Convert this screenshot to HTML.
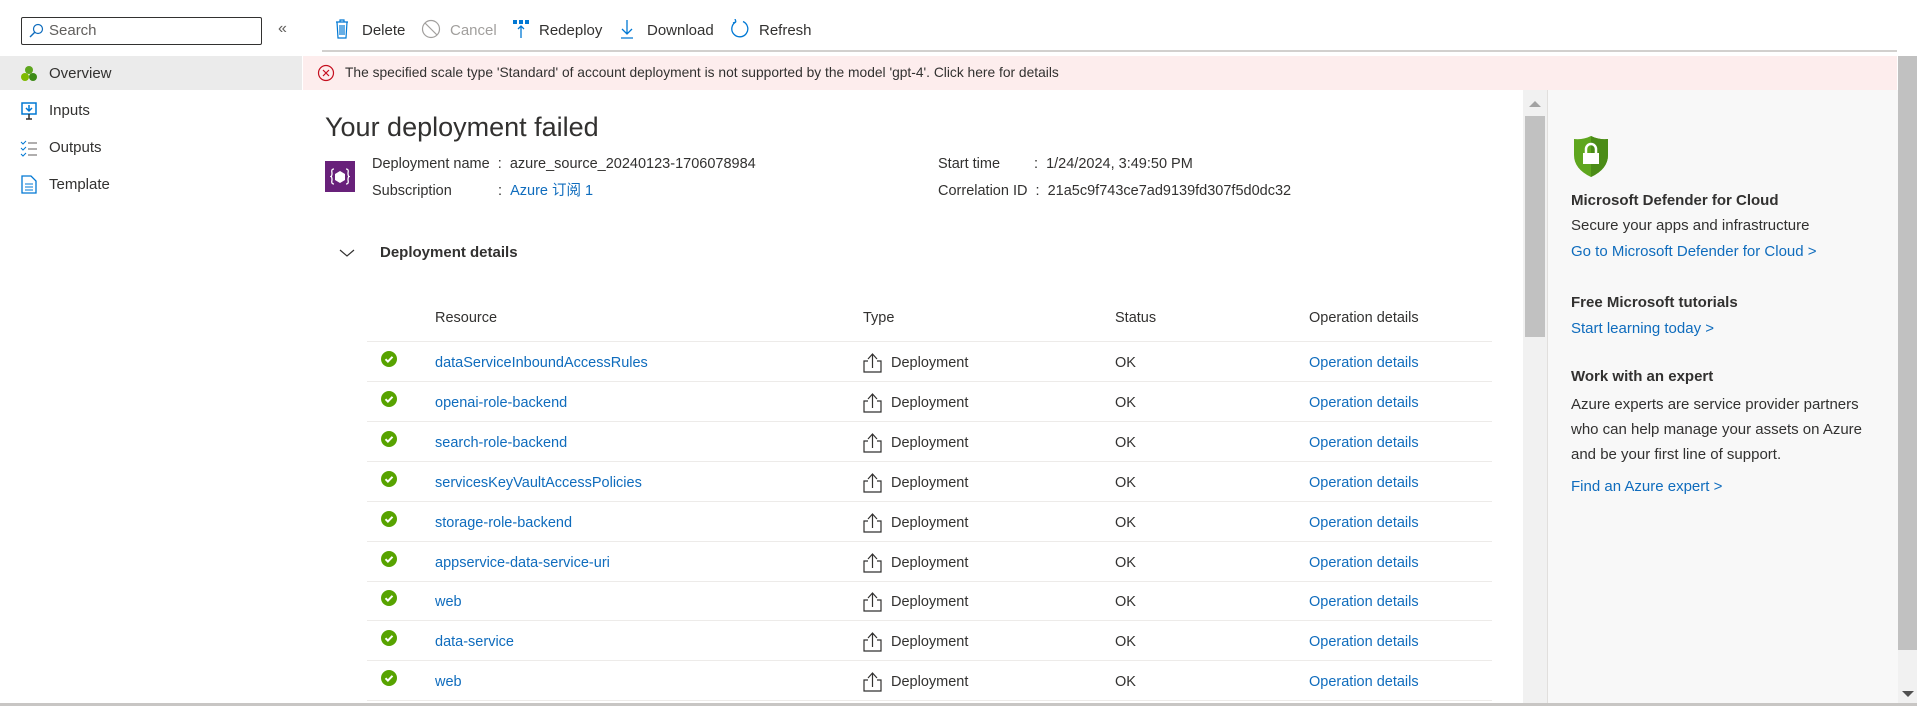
<!DOCTYPE html>
<html><head><meta charset="utf-8"><style>
*{box-sizing:border-box;margin:0;padding:0}
body{width:1917px;height:706px;overflow:hidden;background:#fff;font-family:"Liberation Sans","Noto Sans CJK SC",sans-serif;color:#323130;position:relative;font-size:15px}
.a{position:absolute;white-space:nowrap}
.link{color:#0f6cbd}
.row{position:absolute;left:367px;width:1125px;height:40px;border-bottom:1px solid #edebe9;font-size:14.5px}
.row span{position:absolute;top:13px;line-height:17px}
.ck{position:absolute;left:14px;top:12px;width:16px;height:16px;border-radius:50%;background:#57a300}
</style></head><body>
<!-- sidebar -->
<div class="a" style="left:21px;top:17px;width:241px;height:28px;border:1px solid #323130;border-radius:2px"></div>
<svg class="a" style="left:28px;top:23px" width="16" height="16" viewBox="0 0 16 16"><circle cx="10" cy="6" r="4.5" fill="none" stroke="#0f6cbd" stroke-width="1.2"/><path d="M7 9 L2 14" stroke="#0f6cbd" stroke-width="1.4"/></svg>
<div class="a" style="left:49px;top:22px;color:#605e5c;font-size:15px">Search</div>
<div class="a" style="left:278px;top:20px;color:#605e5c;font-size:16px">«</div>
<div class="a" style="left:0;top:56px;width:302px;height:34px;background:#ebebeb"></div>
<svg class="a" style="left:20px;top:65px" width="18" height="18" viewBox="0 0 18 18"><circle cx="9" cy="5" r="4" fill="#5ea61e"/><circle cx="5" cy="12" r="4" fill="#7fba00"/><circle cx="13" cy="12" r="4" fill="#3d8b17"/></svg>
<div class="a" style="left:49px;top:65px">Overview</div>
<svg class="a" style="left:20px;top:102px" width="18" height="18" viewBox="0 0 18 18"><rect x="2" y="1" width="14" height="11" fill="#fff" stroke="#0078d4" stroke-width="1.5"/><path d="M9 3v6M6 6l3 3 3-3" stroke="#0078d4" fill="none" stroke-width="1.5"/><path d="M6 17h6M9 12v5" stroke="#323130" stroke-width="1.5"/></svg>
<div class="a" style="left:49px;top:102px">Inputs</div>
<svg class="a" style="left:20px;top:139px" width="18" height="18" viewBox="0 0 18 18"><path d="M1 3l2 2 3-3M1 9l2 2 3-3M1 15l2 2 3-3" stroke="#0078d4" fill="none"/><path d="M8 4h9M8 10h9M8 16h9" stroke="#605e5c"/></svg>
<div class="a" style="left:49px;top:139px">Outputs</div>
<svg class="a" style="left:21px;top:175px" width="16" height="19" viewBox="0 0 16 19"><path d="M1 1h9l5 5v12H1z" fill="#fff" stroke="#0078d4" stroke-width="1.3"/><path d="M4 9h8M4 12h8M4 15h8" stroke="#0078d4"/></svg>
<div class="a" style="left:49px;top:176px">Template</div>
<!-- toolbar -->
<svg class="a" style="left:335px;top:19px" width="14" height="20" viewBox="0 0 14 20"><path d="M1 3h12M5 3V1h4v2M2 3l1 16h8l1-16M5 6v10M7 6v10M9 6v10" stroke="#0078d4" fill="none" stroke-width="1.2"/></svg>
<div class="a" style="left:362px;top:22px">Delete</div>
<svg class="a" style="left:421px;top:19px" width="20" height="20" viewBox="0 0 20 20"><circle cx="10" cy="10" r="8.5" fill="none" stroke="#a19f9d" stroke-width="1.2"/><path d="M4 4l12 12" stroke="#a19f9d" stroke-width="1.2"/></svg>
<div class="a" style="left:450px;top:22px;color:#a19f9d">Cancel</div>
<svg class="a" style="left:513px;top:20px" width="16" height="18" viewBox="0 0 16 18"><rect x="0" y="0" width="4" height="4" fill="#0078d4"/><rect x="6" y="0" width="4" height="4" fill="#0078d4"/><rect x="12" y="0" width="4" height="4" fill="#0078d4"/><path d="M8 6v12M5 9l3-3 3 3" stroke="#0078d4" fill="none" stroke-width="1.3"/></svg>
<div class="a" style="left:539px;top:22px">Redeploy</div>
<svg class="a" style="left:620px;top:19px" width="14" height="20" viewBox="0 0 14 20"><path d="M7 1v14M2 10l5 5 5-5M1 19h12" stroke="#0078d4" fill="none" stroke-width="1.3"/></svg>
<div class="a" style="left:647px;top:22px">Download</div>
<svg class="a" style="left:730px;top:19px" width="20" height="20" viewBox="0 0 20 20"><path d="M13 2.5A8 8 0 1 1 6 2.8M6 2.8 L5 0M6 2.8L3 4" stroke="#0078d4" fill="none" stroke-width="1.3"/></svg>
<div class="a" style="left:759px;top:22px">Refresh</div>
<div class="a" style="left:322px;top:50px;width:1575px;height:2px;background:#d2d0ce"></div>
<!-- banner -->
<div class="a" style="left:303px;top:56px;width:1594px;height:34px;background:#fdeded"></div>
<svg class="a" style="left:317px;top:64px" width="18" height="18" viewBox="0 0 18 18"><circle cx="9" cy="9" r="7.5" fill="none" stroke="#c50f1f" stroke-width="1.2"/><path d="M6 6l6 6M12 6l-6 6" stroke="#c50f1f" stroke-width="1.2"/></svg>
<div class="a" style="left:345px;top:65px;font-size:13.8px">The specified scale type 'Standard' of account deployment is not supported by the model 'gpt-4'. Click here for details</div>
<!-- main -->
<div class="a" style="left:325px;top:112px;font-size:27px;color:#323130">Your deployment failed</div>
<div class="a" style="left:325px;top:161px;width:30px;height:31px;background:#68217a"></div>
<svg class="a" style="left:330px;top:167px" width="20" height="19" viewBox="0 0 20 19"><path d="M4 2Q1 2 2 6Q2 9 1 9.5Q2 10 2 13Q1 17 4 17M16 2Q19 2 18 6Q18 9 19 9.5Q18 10 18 13Q19 17 16 17" stroke="#fff" fill="none" stroke-width="1.3"/><path d="M10 4l5 3v6l-5 3-5-3V7z" fill="#fff"/></svg>
<div class="a" style="left:372px;top:156px;font-size:14.5px;line-height:17px">Deployment name&nbsp;&nbsp;:&nbsp;&nbsp;azure_source_20240123-1706078984</div>
<div class="a" style="left:372px;top:183px;font-size:14.5px;line-height:17px">Subscription</div>
<div class="a" style="left:498px;top:183px;font-size:14.5px;line-height:17px;height:17px">:&nbsp;&nbsp;<span class="link">Azure 订阅 1</span></div>
<div class="a" style="left:938px;top:156px;font-size:14.5px;line-height:17px">Start time</div>
<div class="a" style="left:1034px;top:156px;font-size:14.5px;line-height:17px">:&nbsp;&nbsp;1/24/2024, 3:49:50 PM</div>
<div class="a" style="left:938px;top:183px;font-size:14.5px;line-height:17px">Correlation ID&nbsp;&nbsp;:&nbsp;&nbsp;21a5c9f743ce7ad9139fd307f5d0dc32</div>
<svg class="a" style="left:339px;top:248px" width="16" height="10" viewBox="0 0 16 10"><path d="M1 2l7 6 7-6" stroke="#323130" fill="none" stroke-width="1.2"/></svg>
<div class="a" style="left:380px;top:244px;font-weight:bold;font-size:15px">Deployment details</div>
<!-- table -->
<div class="row" style="top:302px"><span style="left:68px;top:8px">Resource</span><span style="left:496px;top:8px">Type</span><span style="left:748px;top:8px">Status</span><span style="left:942px;top:8px">Operation details</span></div>
<div id="rows"></div>
<!-- scrollbar -->
<div class="a" style="left:1523px;top:90px;width:24px;height:616px;background:#f1f1f1"></div>
<svg class="a" style="left:1528px;top:100px" width="14" height="8"><path d="M1 7L7 1 13 7z" fill="#a3a3a3"/></svg>
<div class="a" style="left:1525px;top:116px;width:20px;height:221px;background:#c1c1c1"></div>
<!-- right panel -->
<div class="a" style="left:1547px;top:90px;width:351px;height:616px;background:#f8f8f8;border-left:1px solid #e1dfdd"></div>
<svg class="a" style="left:1573px;top:135px" width="36" height="43" viewBox="0 0 36 43"><path d="M18 1Q26 5 35 4V20Q35 34 18 42Q1 34 1 20V4Q10 5 18 1z" fill="#5ea61e"/><path d="M18 1Q26 5 35 4V20Q35 34 18 42z" fill="#4b8c17"/><rect x="10" y="18" width="16" height="11" fill="#fff"/><path d="M13 18v-4a5 5 0 0 1 10 0v4" stroke="#fff" stroke-width="2.5" fill="none"/></svg>
<div class="a" style="left:1571px;top:192px;font-size:15px;font-weight:bold;color:#323130">Microsoft Defender for Cloud</div>
<div class="a" style="left:1571px;top:217px;font-size:15px">Secure your apps and infrastructure</div>
<div class="a link" style="left:1571px;top:243px;font-size:15px">Go to Microsoft Defender for Cloud &gt;</div>
<div class="a" style="left:1571px;top:294px;font-size:15px;font-weight:bold">Free Microsoft tutorials</div>
<div class="a link" style="left:1571px;top:320px;font-size:15px">Start learning today &gt;</div>
<div class="a" style="left:1571px;top:368px;font-size:15px;font-weight:bold">Work with an expert</div>
<div class="a" style="left:1571px;top:392px;font-size:15px;line-height:25px">Azure experts are service provider partners<br>who can help manage your assets on Azure<br>and be your first line of support.</div>
<div class="a link" style="left:1571px;top:478px;font-size:15px">Find an Azure expert &gt;</div>
<div class="a" style="left:1898px;top:56px;width:19px;height:594px;background:#c1c1c1"></div>
<div class="a" style="left:1898px;top:650px;width:19px;height:56px;background:#f1f1f1"></div>
<svg class="a" style="left:1901px;top:690px" width="14" height="8"><path d="M1 1L7 7 13 1z" fill="#505050"/></svg>
<div class="a" style="left:0;top:703px;width:1917px;height:3px;background:#c8c6c4"></div>
<script>
var n=["dataServiceInboundAccessRules","openai-role-backend","search-role-backend","servicesKeyVaultAccessPolicies","storage-role-backend","appservice-data-service-uri","web","data-service","web"];
var h="";
n.forEach(function(s,i){var t=342+i*39.9;
h+='<div class="row" style="top:'+t+'px"><div class="ck" style="top:9px"><svg width="16" height="16" viewBox="0 0 16 16"><path d="M4.5 8.2l2.4 2.4 4.6-4.8" stroke="#fff" stroke-width="2" fill="none"/></svg></div><span class="link" style="left:68px">'+s+'</span><svg style="position:absolute;left:496px;top:11px" width="19" height="20" viewBox="0 0 19 20"><path d="M5 8H1v11h17V8h-4M9.5 15V1M5 6l4.5-5 4.5 5" stroke="#323130" fill="none" stroke-width="1.2"/></svg><span style="left:524px">Deployment</span><span style="left:748px">OK</span><span class="link" style="left:942px">Operation details</span></div>';});
document.getElementById("rows").innerHTML=h;
</script>
</body></html>
